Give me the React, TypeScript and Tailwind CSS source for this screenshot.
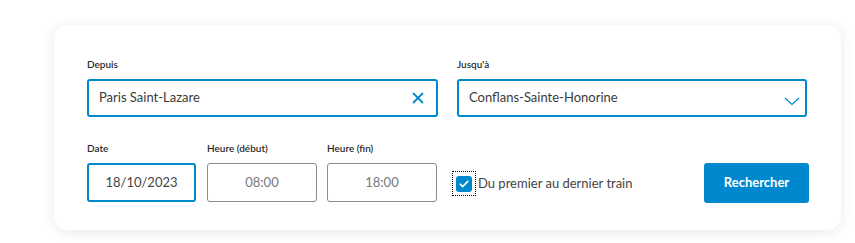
import React from "react";

function Label({ children }: { children: React.ReactNode }) {
  return (
    <div className="mb-2 h-[14px] text-[10px] font-semibold leading-[14px] text-[#2b2b2b]">
      {children}
    </div>
  );
}

function TimeField({ label, value, width, active }: { label: string; value: string; width: string; active?: boolean }) {
  return (
    <div className={width}>
      <Label>{label}</Label>
      <div
        className={`flex h-[39px] items-center justify-center rounded-[3px] text-[13px] ${
          active ? "border-2 border-[#0088ce] text-[#454545]" : "border border-[#8c8c8c] text-[#7a7a7a]"
        }`}
      >
        {value}
      </div>
    </div>
  );
}

export default function App() {
  return (
    <div className="h-[243px] w-[855px] bg-white pt-[25px] font-['Lato','Noto_Sans',sans-serif]">
      <div className="ml-[54px] w-[787px] rounded-[14px] bg-white pb-[28px] pl-[33px] pr-[34px] pt-[32px] shadow-[0_2px_14px_rgba(0,0,0,0.09)]">
        <div className="grid grid-cols-[351px_350px] gap-[19px]">
          <div>
            <Label>Depuis</Label>
            <div className="flex h-[38px] items-center justify-between rounded-[3px] border-2 border-[#0088ce] pl-[10px] pr-[12px] text-[13px] text-[#3a3a3a]">
              <span>Paris Saint-Lazare</span>
              <svg width="12" height="12" viewBox="0 0 12 12" fill="none" stroke="#0088ce" strokeWidth="1.8" strokeLinecap="round">
                <path d="M1.5 1.5l9 9M10.5 1.5l-9 9" />
              </svg>
            </div>
          </div>
          <div>
            <Label>Jusqu'à</Label>
            <div className="flex h-[38px] items-center justify-between rounded-[3px] border-2 border-[#0088ce] pl-[10px] pr-[5px] text-[13px] text-[#3a3a3a]">
              <span>Conflans-Sainte-Honorine</span>
              <svg width="16" height="10" viewBox="0 0 16 10" fill="none" stroke="#0088ce" strokeWidth="1.2" className="mt-[6px]">
                <path d="M1 2l7 6.5L15 2" />
              </svg>
            </div>
          </div>
        </div>

        <div className="mt-6 flex items-end">
          <TimeField label="Date" value="18/10/2023" width="w-[109px]" active />
          <TimeField label="Heure (début)" value="08:00" width="ml-[11px] w-[110px]" />
          <TimeField label="Heure (fin)" value="18:00" width="ml-[10px] w-[110px]" />
          <label className="mb-[6px] ml-[15px] flex items-center text-[13px] text-[#444]">
            <span className="flex h-[25px] w-[24px] items-center justify-center outline-1 outline-dotted outline-black -outline-offset-1">
              <span className="flex h-4 w-4 items-center justify-center rounded-[3px] bg-[#0088ce]">
                <svg width="10" height="8" viewBox="0 0 10 8" fill="none" stroke="white" strokeWidth="1.6" strokeLinecap="round" strokeLinejoin="round">
                  <path d="M1.2 4.2l2.5 2.4L8.8 1.4" />
                </svg>
              </span>
            </span>
            <span className="ml-[2px]">Du premier au dernier train</span>
          </label>
          <button className="-mb-px -mr-[2px] ml-auto h-[40px] w-[105px] rounded-[3px] bg-[#0088ce] text-[13px] font-bold text-white">
            Rechercher
          </button>
        </div>
      </div>
    </div>
  );
}
